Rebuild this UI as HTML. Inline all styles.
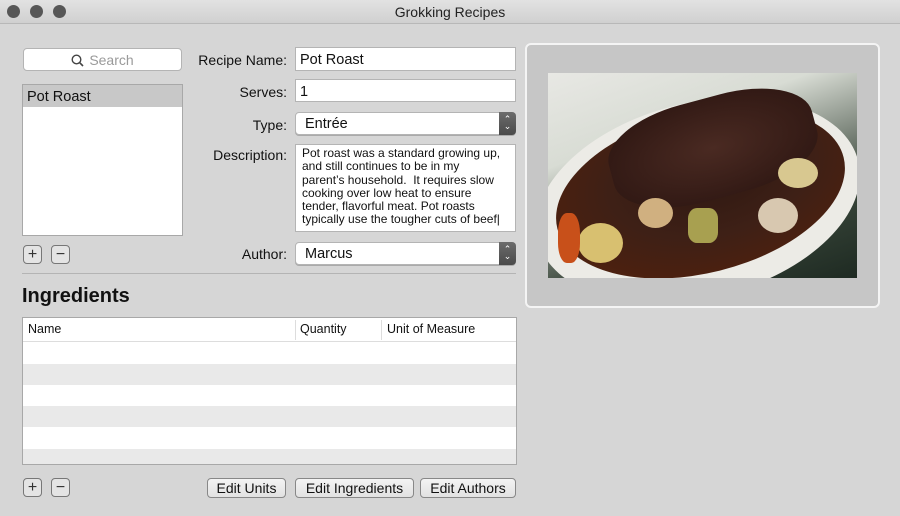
<!DOCTYPE html>
<html><head><meta charset="utf-8"><style>
*{box-sizing:border-box;margin:0;padding:0}
body{width:900px;height:516px;background:#d6d6d6;font-family:"Liberation Sans",sans-serif;font-size:14px;color:#111;position:relative;overflow:hidden}
.a{position:absolute}
.title{left:0;top:0;width:900px;height:24px;background:linear-gradient(#e2e2e2,#d0d0d0);border-bottom:1px solid #b8b8b8;text-align:center;font-size:14px;line-height:24px;color:#222}
.dot{width:13px;height:13px;border-radius:50%;background:#575757;top:5px}
.field{background:#fff;border:1px solid #b4b4b4;}
.lbl{text-align:right;width:200px;left:87px;font-size:14px}
.pop{background:#fff;border:1px solid #b4b4b4;border-radius:4px;box-shadow:0 1px 0 #aaa}
.pop .ar{position:absolute;right:-1px;top:-1px;bottom:-1px;width:17px;background:linear-gradient(#6c6c6c,#4a4a4a);border-radius:0 4px 4px 0;color:#fff;font-size:9px;line-height:7px;text-align:center;padding-top:4px}
.sb{width:19px;height:19px;border:1px solid #777;border-radius:4px;background:#e4e4e4;font-size:16px;line-height:18px;text-align:center;color:#333}
.btn{height:20px;border:1px solid #888;border-radius:4px;background:linear-gradient(#f4f4f4,#e2e2e2);font-size:14px;line-height:19px;text-align:center;top:478px}
</style></head><body>
<div class="a title">Grokking Recipes</div>
<div class="a dot" style="left:7px"></div><div class="a dot" style="left:30px"></div><div class="a dot" style="left:53px"></div>

<div class="a field" style="left:23px;top:48px;width:159px;height:23px;border-radius:4px;text-align:center;line-height:22px;color:#9a9a9a;font-size:14px"><svg width="13" height="13" style="vertical-align:-2px;margin-right:5px" viewBox="0 0 13 13"><circle cx="5.5" cy="5.5" r="4.3" fill="none" stroke="#444" stroke-width="1.4"/><path d="M8.6 8.6L12 12" stroke="#444" stroke-width="1.6"/></svg>Search</div>

<div class="a" style="left:22px;top:84px;width:161px;height:152px;background:#fff;border:1px solid #a8a8a8"></div>
<div class="a" style="left:23px;top:85px;width:159px;height:22px;background:#c8c8c8;padding-left:4px;line-height:24px;font-size:14.5px">Pot Roast</div>
<div class="a sb" style="left:23px;top:245px">+</div><div class="a sb" style="left:51px;top:245px">−</div>

<div class="a lbl" style="top:52px">Recipe Name:</div>
<div class="a field" style="left:295px;top:47px;width:221px;height:24px;padding:4px 4px;font-size:14.5px">Pot Roast</div>
<div class="a lbl" style="top:84px">Serves:</div>
<div class="a field" style="left:295px;top:79px;width:221px;height:23px;padding:4px 4px;font-size:14.5px">1</div>
<div class="a lbl" style="top:117px">Type:</div>
<div class="a pop" style="left:295px;top:112px;width:221px;height:23px;padding:3px 9px;font-size:14.5px">Entrée<div class="ar">⌃<br>⌄</div></div>
<div class="a lbl" style="top:147px">Description:</div>
<div class="a field" style="left:295px;top:144px;width:221px;height:88px;padding:2px 6px;font-size:12px;line-height:13.3px;white-space:nowrap">Pot roast was a standard growing up,<br>and still continues to be in my<br>parent’s household.&nbsp; It requires slow<br>cooking over low heat to ensure<br>tender, flavorful meat. Pot roasts<br>typically use the tougher cuts of beef|</div>
<div class="a lbl" style="top:246px">Author:</div>
<div class="a pop" style="left:295px;top:242px;width:221px;height:23px;padding:3px 9px;font-size:14.5px">Marcus<div class="ar">⌃<br>⌄</div></div>

<div class="a" style="left:22px;top:273px;width:494px;height:1px;background:#b4b4b4"></div>
<div class="a" style="left:22px;top:285px;font-size:20px;font-weight:bold">Ingredients</div>

<div class="a" style="left:22px;top:317px;width:495px;height:148px;border:1px solid #a8a8a8;background:#fff;overflow:hidden">
 <div class="a" style="left:0;top:0;width:493px;height:24px;border-bottom:1px solid #ddd;font-size:12.5px;line-height:23px">
  <span class="a" style="left:5px">Name</span><span class="a" style="left:277px">Quantity</span><span class="a" style="left:364px">Unit of Measure</span>
  <div class="a" style="left:272px;top:2px;width:1px;height:20px;background:#ddd"></div>
  <div class="a" style="left:358px;top:2px;width:1px;height:20px;background:#ddd"></div>
 </div>
 <div class="a" style="left:0;top:46px;width:493px;height:21px;background:#e9e9e9"></div>
 <div class="a" style="left:0;top:88px;width:493px;height:21px;background:#e9e9e9"></div>
 <div class="a" style="left:0;top:131px;width:493px;height:21px;background:#e9e9e9"></div>
</div>

<div class="a sb" style="left:23px;top:478px">+</div><div class="a sb" style="left:51px;top:478px">−</div>
<div class="a btn" style="left:207px;width:79px">Edit Units</div>
<div class="a btn" style="left:295px;width:119px">Edit Ingredients</div>
<div class="a btn" style="left:420px;width:96px">Edit Authors</div>

<div class="a" style="left:525px;top:43px;width:355px;height:265px;background:#c6c6c6;border:2px solid #f4f4f4;border-radius:6px"></div>
<div class="a" style="left:548px;top:73px;width:309px;height:205px;overflow:hidden;background:linear-gradient(160deg,#e8e8e4 0%,#d8dcd4 30%,#39463a 70%,#1e2a22 100%)">
 <div class="a" style="left:-15px;top:30px;width:330px;height:195px;border-radius:50%;background:#ecebe6;transform:rotate(-14deg)"></div>
 <div class="a" style="left:5px;top:40px;width:295px;height:160px;border-radius:50%;background:radial-gradient(ellipse at 55% 40%,#2e1812 0%,#3e2016 45%,#4a2010 70%,#5a2a10 100%);transform:rotate(-14deg)"></div>
 <div class="a" style="left:60px;top:25px;width:210px;height:100px;border-radius:40%;background:radial-gradient(#4a2a22,#2a1410);transform:rotate(-15deg)"></div>
 <div class="a" style="left:30px;top:150px;width:45px;height:40px;border-radius:50%;background:#d8c070"></div>
 <div class="a" style="left:10px;top:140px;width:22px;height:50px;border-radius:40%;background:#c8501a"></div>
 <div class="a" style="left:90px;top:125px;width:35px;height:30px;border-radius:50%;background:#d0b080"></div>
 <div class="a" style="left:140px;top:135px;width:30px;height:35px;border-radius:30%;background:#a8a050"></div>
 <div class="a" style="left:210px;top:125px;width:40px;height:35px;border-radius:50%;background:#d8c8b0"></div>
 <div class="a" style="left:230px;top:85px;width:40px;height:30px;border-radius:50%;background:#d8c890"></div>
</div>
</body></html>
